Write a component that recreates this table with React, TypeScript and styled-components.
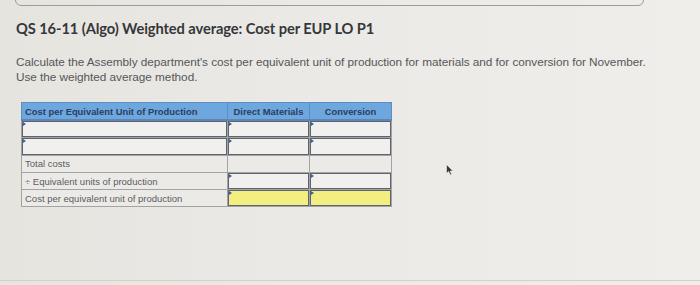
import React from "react";
import styled, { createGlobalStyle } from "styled-components";

const GlobalStyle = createGlobalStyle`
  html, body {
    margin: 0;
    padding: 0;
  }
  body {
    width: 700px;
    height: 285px;
    overflow: hidden;
    background: linear-gradient(90deg, #e6e4df 0%, #ebe9e5 40%, #efeeea 100%);
    font-family: Lato, "Open Sans", Arial, sans-serif;
  }
`;

const Page = styled.div`
  position: relative;
  height: 285px;
  display: flex;
  flex-direction: column;
`;

const TopBox = styled.div`
  margin: -20px 0 0 15px;
  width: 627px;
  height: 24px;
  border: 1px solid #9d9c99;
  border-radius: 6px;
`;

const Content = styled.div`
  padding: 0 0 0 16px;
  flex: 1;
`;

const Title = styled.h1`
  margin: 13px 0 0;
  font-size: 14.7px;
  font-weight: 700;
  color: #35373a;
  letter-spacing: -0.1px;
`;

const Prompt = styled.p`
  margin: 18px 0 0;
  font-family: "Liberation Sans", Arial, sans-serif;
  font-size: 11.8px;
  line-height: 14.5px;
  color: #55575a;
  letter-spacing: -0.05px;
`;

const Table = styled.table`
  margin: 18px 0 0 5px;
  border-collapse: collapse;
  table-layout: fixed;
  width: 370px;
  font-family: "Liberation Sans", Arial, sans-serif;
  font-size: 9.5px;
`;

const HeadCell = styled.th<{ $left?: boolean }>`
  height: 16px;
  padding: 0 3px;
  background: #6ea6de;
  color: #2a3e5e;
  font-size: 9.4px;
  font-weight: 700;
  text-align: ${(p) => (p.$left ? "left" : "center")};
  border: 1px solid #5a8fc6;
  border-bottom: 2px solid #5d86b4;
`;

const Cell = styled.td<{ $input?: boolean; $yellow?: boolean }>`
  position: relative;
  height: 16.3px;
  padding: 0 3px;
  color: #5a5c60;
  background: ${(p) => (p.$yellow ? "#f2ee7f" : p.$input ? "#f1f0ee" : "#eceae7")};
  border: 1px solid #a3a3a3;
  box-shadow: ${(p) => (p.$input ? "inset 0 0 0 1px #5d6470" : "none")};

  &::before {
    content: "";
    display: ${(p) => (p.$input ? "block" : "none")};
    position: absolute;
    left: 1px;
    top: 1px;
    border-left: 3px solid #3e5f92;
    border-top: 2px solid transparent;
    border-bottom: 2px solid transparent;
  }
`;

const Cursor = styled.svg`
  position: absolute;
  left: 446px;
  top: 164px;
`;

const BottomBox = styled.div`
  height: 4px;
  border-top: 1px solid #d2d0cc;
`;

export default function App() {
  return (
    <Page>
      <GlobalStyle />
      <TopBox />
      <Content>
        <Title>QS 16-11 (Algo) Weighted average: Cost per EUP LO P1</Title>
        <Prompt>
          Calculate the Assembly department's cost per equivalent unit of production for materials and for conversion for November.
          <br />
          Use the weighted average method.
        </Prompt>
        <Table>
          <colgroup>
            <col style={{ width: 206 }} />
            <col style={{ width: 82 }} />
            <col style={{ width: 82 }} />
          </colgroup>
          <thead>
            <tr>
              <HeadCell $left>Cost per Equivalent Unit of Production</HeadCell>
              <HeadCell>Direct Materials</HeadCell>
              <HeadCell>Conversion</HeadCell>
            </tr>
          </thead>
          <tbody>
            <tr>
              <Cell $input />
              <Cell $input />
              <Cell $input />
            </tr>
            <tr>
              <Cell $input />
              <Cell $input />
              <Cell $input />
            </tr>
            <tr>
              <Cell>Total costs</Cell>
              <Cell />
              <Cell />
            </tr>
            <tr>
              <Cell>÷ Equivalent units of production</Cell>
              <Cell $input />
              <Cell $input />
            </tr>
            <tr>
              <Cell>Cost per equivalent unit of production</Cell>
              <Cell $input $yellow />
              <Cell $input $yellow />
            </tr>
          </tbody>
        </Table>
      </Content>
      <BottomBox />
      <Cursor width="8" height="12" viewBox="0 0 8 12">
        <path d="M0.5 0.5 L0.5 9.5 L2.6 7.6 L4.2 11 L5.6 10.3 L4.1 7.1 L7 7.1 Z" fill="#3a3a3a" stroke="#f4f4f4" strokeWidth="0.6" />
      </Cursor>
    </Page>
  );
}
